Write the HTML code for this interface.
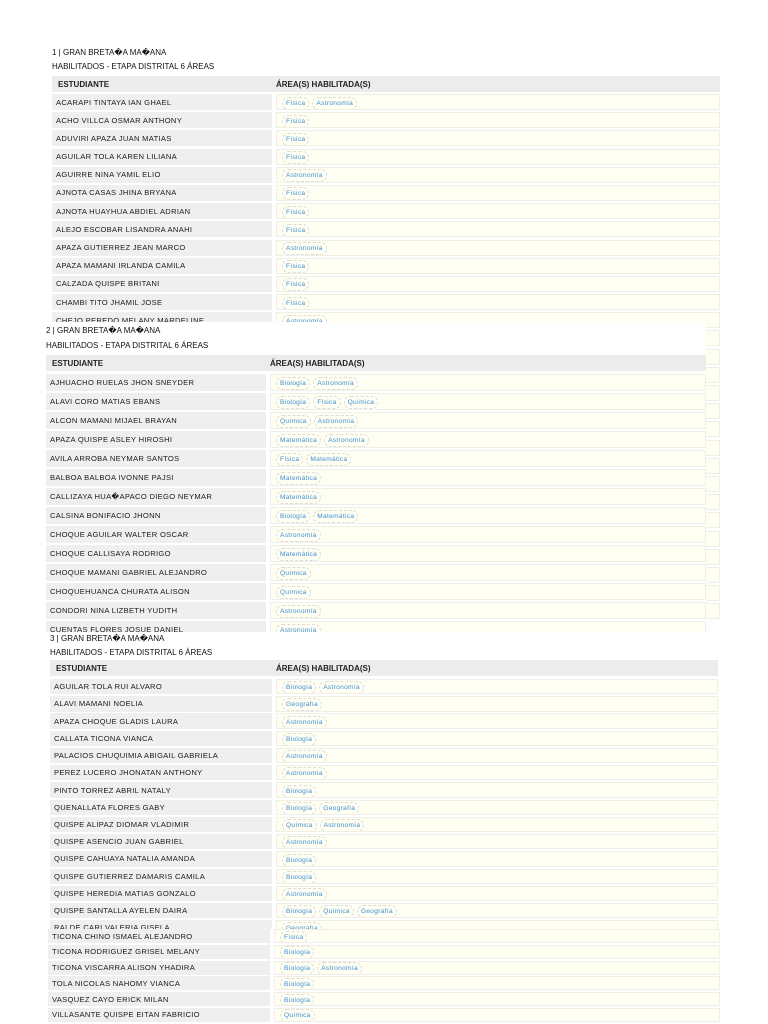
<!DOCTYPE html>
<html><head><meta charset="utf-8"><style>
*{margin:0;padding:0;box-sizing:border-box}
body{width:768px;height:1024px;background:#fff;position:relative;overflow:hidden;font-family:"Liberation Sans",sans-serif;color:#222}
.s{position:absolute;background:#fff;overflow:hidden}
.t{font-size:8px;position:absolute;left:0;white-space:nowrap;color:#111}
.h{position:absolute;left:0;right:0;background:#ececec;font-size:8px;font-weight:bold;display:flex;align-items:center}
.h .c1{padding-left:6px}
.rows{position:absolute;left:0;right:0}
.r{display:flex;white-space:nowrap}
.n{background:#efefef;font-size:7.6px;letter-spacing:.3px;display:flex;align-items:center;padding-left:4px;overflow:hidden;color:#1a1a1a}
.a{flex:1;background:#fffef2;border:1px solid #efefe6;margin-left:4px;display:flex;align-items:center;padding-left:5px;overflow:hidden}
.a span{font-size:6.6px;color:#3d8fd6;border:1px dashed #dcdcdc;border-radius:7px;padding:2px 3px 1px;margin-right:3px;letter-spacing:.3px;line-height:8px;margin-top:2px}
.s1{left:52px;top:40px;width:668px;height:592px}
.s1 .r{height:16px;margin-bottom:2.2px}
.s1 .n{width:220px}
.s2{left:46px;top:322px;width:660px;height:310px}
.s2 .r{height:17px;margin-bottom:2px}
.s2 .n{width:220px}
.s3{left:50px;top:632px;width:668px;height:297px}
.s3 .r{height:15.3px;margin-bottom:1.95px}
.s3 .n{width:222px}
.s4{left:48px;top:929px;width:672px;height:95px}
.s4 .r{height:14px;margin-bottom:1.8px}
.s4 .n{width:222px}
</style></head><body>

<div class="s s1">
<div class="t" style="top:8px">1 | GRAN BRETA�A MA�ANA</div>
<div class="t" style="top:22px">HABILITADOS - ETAPA DISTRITAL 6 ÁREAS</div>
<div class="h" style="top:36px;height:16px"><div class="c1" style="width:224px">ESTUDIANTE</div><div>ÁREA(S) HABILITADA(S)</div></div>
<div class="rows" style="top:54px">
<div class="r"><div class="n">ACARAPI TINTAYA IAN GHAEL</div><div class="a"><span>Física</span><span>Astronomía</span></div></div>
<div class="r"><div class="n">ACHO VILLCA OSMAR ANTHONY</div><div class="a"><span>Física</span></div></div>
<div class="r"><div class="n">ADUVIRI APAZA JUAN MATIAS</div><div class="a"><span>Física</span></div></div>
<div class="r"><div class="n">AGUILAR TOLA KAREN LILIANA</div><div class="a"><span>Física</span></div></div>
<div class="r"><div class="n">AGUIRRE NINA YAMIL ELIO</div><div class="a"><span>Astronomía</span></div></div>
<div class="r"><div class="n">AJNOTA CASAS JHINA BRYANA</div><div class="a"><span>Física</span></div></div>
<div class="r"><div class="n">AJNOTA HUAYHUA ABDIEL ADRIAN</div><div class="a"><span>Física</span></div></div>
<div class="r"><div class="n">ALEJO ESCOBAR LISANDRA ANAHI</div><div class="a"><span>Física</span></div></div>
<div class="r"><div class="n">APAZA GUTIERREZ JEAN MARCO</div><div class="a"><span>Astronomía</span></div></div>
<div class="r"><div class="n">APAZA MAMANI IRLANDA CAMILA</div><div class="a"><span>Física</span></div></div>
<div class="r"><div class="n">CALZADA QUISPE BRITANI</div><div class="a"><span>Física</span></div></div>
<div class="r"><div class="n">CHAMBI TITO JHAMIL JOSE</div><div class="a"><span>Física</span></div></div>
<div class="r"><div class="n">CHEJO PEREDO MELANY MARDELINE</div><div class="a"><span>Astronomía</span></div></div>
<div class="r"><div class="n"></div><div class="a"></div></div>
<div class="r"><div class="n"></div><div class="a"></div></div>
<div class="r"><div class="n"></div><div class="a"></div></div>
<div class="r"><div class="n"></div><div class="a"></div></div>
<div class="r"><div class="n"></div><div class="a"></div></div>
<div class="r"><div class="n"></div><div class="a"></div></div>
<div class="r"><div class="n"></div><div class="a"></div></div>
<div class="r"><div class="n"></div><div class="a"></div></div>
<div class="r"><div class="n"></div><div class="a"></div></div>
<div class="r"><div class="n"></div><div class="a"></div></div>
<div class="r"><div class="n"></div><div class="a"></div></div>
<div class="r"><div class="n"></div><div class="a"></div></div>
<div class="r"><div class="n"></div><div class="a"></div></div>
<div class="r"><div class="n"></div><div class="a"></div></div>
<div class="r"><div class="n"></div><div class="a"></div></div>
<div class="r"><div class="n"></div><div class="a"></div></div>
</div>
</div>

<div class="s s2">
<div class="t" style="top:4px">2 | GRAN BRETA�A MA�ANA</div>
<div class="t" style="top:19px">HABILITADOS - ETAPA DISTRITAL 6 ÁREAS</div>
<div class="h" style="top:33px;height:16px"><div class="c1" style="width:224px">ESTUDIANTE</div><div>ÁREA(S) HABILITADA(S)</div></div>
<div class="rows" style="top:52px">
<div class="r"><div class="n">AJHUACHO RUELAS JHON SNEYDER</div><div class="a"><span>Biología</span><span>Astronomía</span></div></div>
<div class="r"><div class="n">ALAVI CORO MATIAS EBANS</div><div class="a"><span>Biología</span><span>Física</span><span>Química</span></div></div>
<div class="r"><div class="n">ALCON MAMANI MIJAEL BRAYAN</div><div class="a"><span>Química</span><span>Astronomía</span></div></div>
<div class="r"><div class="n">APAZA QUISPE ASLEY HIROSHI</div><div class="a"><span>Matemática</span><span>Astronomía</span></div></div>
<div class="r"><div class="n">AVILA ARROBA NEYMAR SANTOS</div><div class="a"><span>Física</span><span>Matemática</span></div></div>
<div class="r"><div class="n">BALBOA BALBOA IVONNE PAJSI</div><div class="a"><span>Matemática</span></div></div>
<div class="r"><div class="n">CALLIZAYA HUA�APACO DIEGO NEYMAR</div><div class="a"><span>Matemática</span></div></div>
<div class="r"><div class="n">CALSINA BONIFACIO JHONN</div><div class="a"><span>Biología</span><span>Matemática</span></div></div>
<div class="r"><div class="n">CHOQUE AGUILAR WALTER OSCAR</div><div class="a"><span>Astronomía</span></div></div>
<div class="r"><div class="n">CHOQUE CALLISAYA RODRIGO</div><div class="a"><span>Matemática</span></div></div>
<div class="r"><div class="n">CHOQUE MAMANI GABRIEL ALEJANDRO</div><div class="a"><span>Química</span></div></div>
<div class="r"><div class="n">CHOQUEHUANCA CHURATA ALISON</div><div class="a"><span>Química</span></div></div>
<div class="r"><div class="n">CONDORI NINA LIZBETH YUDITH</div><div class="a"><span>Astronomía</span></div></div>
<div class="r"><div class="n">CUENTAS FLORES JOSUE DANIEL</div><div class="a"><span>Astronomía</span></div></div>
</div>
</div>

<div class="s s3">
<div class="t" style="top:2px">3 | GRAN BRETA�A MA�ANA</div>
<div class="t" style="top:16px">HABILITADOS - ETAPA DISTRITAL 6 ÁREAS</div>
<div class="h" style="top:28px;height:16px"><div class="c1" style="width:226px">ESTUDIANTE</div><div>ÁREA(S) HABILITADA(S)</div></div>
<div class="rows" style="top:47px">
<div class="r"><div class="n">AGUILAR TOLA RUI ALVARO</div><div class="a"><span>Biología</span><span>Astronomía</span></div></div>
<div class="r"><div class="n">ALAVI MAMANI NOELIA</div><div class="a"><span>Geografía</span></div></div>
<div class="r"><div class="n">APAZA CHOQUE GLADIS LAURA</div><div class="a"><span>Astronomía</span></div></div>
<div class="r"><div class="n">CALLATA TICONA VIANCA</div><div class="a"><span>Biología</span></div></div>
<div class="r"><div class="n">PALACIOS CHUQUIMIA ABIGAIL GABRIELA</div><div class="a"><span>Astronomía</span></div></div>
<div class="r"><div class="n">PEREZ LUCERO JHONATAN ANTHONY</div><div class="a"><span>Astronomía</span></div></div>
<div class="r"><div class="n">PINTO TORREZ ABRIL NATALY</div><div class="a"><span>Biología</span></div></div>
<div class="r"><div class="n">QUENALLATA FLORES GABY</div><div class="a"><span>Biología</span><span>Geografía</span></div></div>
<div class="r"><div class="n">QUISPE ALIPAZ DIOMAR VLADIMIR</div><div class="a"><span>Química</span><span>Astronomía</span></div></div>
<div class="r"><div class="n">QUISPE ASENCIO JUAN GABRIEL</div><div class="a"><span>Astronomía</span></div></div>
<div class="r"><div class="n">QUISPE CAHUAYA NATALIA AMANDA</div><div class="a"><span>Biología</span></div></div>
<div class="r"><div class="n">QUISPE GUTIERREZ DAMARIS CAMILA</div><div class="a"><span>Biología</span></div></div>
<div class="r"><div class="n">QUISPE HEREDIA MATIAS GONZALO</div><div class="a"><span>Astronomía</span></div></div>
<div class="r"><div class="n">QUISPE SANTALLA AYELEN DAIRA</div><div class="a"><span>Biología</span><span>Química</span><span>Geografía</span></div></div>
<div class="r"><div class="n">RALDE CARI VALERIA GISELA</div><div class="a"><span>Geografía</span></div></div>
</div>
</div>

<div class="s s4">
<div class="rows" style="top:0px">
<div class="r"><div class="n">TICONA CHINO ISMAEL ALEJANDRO</div><div class="a"><span>Física</span></div></div>
<div class="r"><div class="n">TICONA RODRIGUEZ GRISEL MELANY</div><div class="a"><span>Biología</span></div></div>
<div class="r"><div class="n">TICONA VISCARRA ALISON YHADIRA</div><div class="a"><span>Biología</span><span>Astronomía</span></div></div>
<div class="r"><div class="n">TOLA NICOLAS NAHOMY VIANCA</div><div class="a"><span>Biología</span></div></div>
<div class="r"><div class="n">VASQUEZ CAYO ERICK MILAN</div><div class="a"><span>Biología</span></div></div>
<div class="r"><div class="n">VILLASANTE QUISPE EITAN FABRICIO</div><div class="a"><span>Química</span></div></div>
</div>
</div>

</body></html>
